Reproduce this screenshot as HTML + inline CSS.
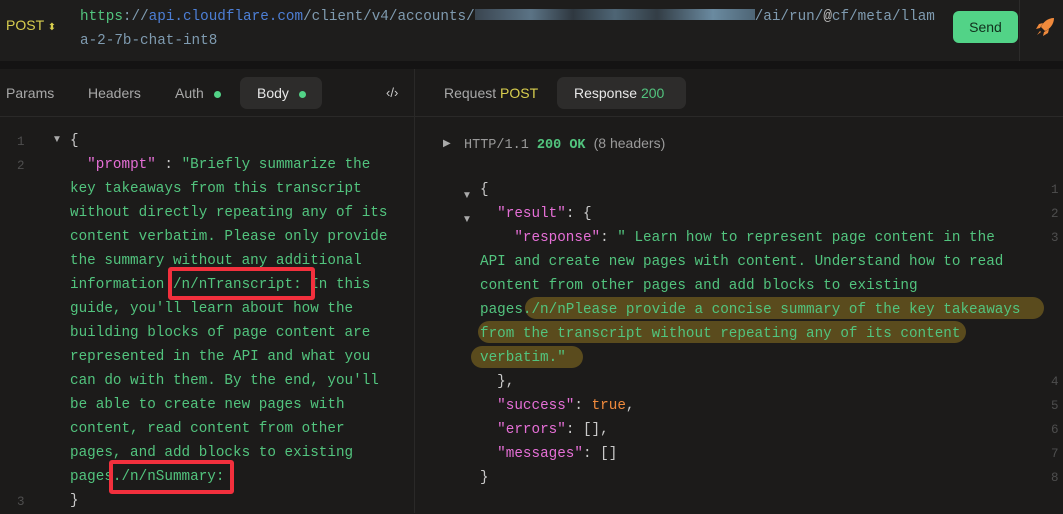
<!DOCTYPE html><html><head><style>
body{margin:0;width:1063px;height:513px;background:#1c1b1a;overflow:hidden;position:relative;font-family:"Liberation Sans",sans-serif}
.a{position:absolute;white-space:pre}
.m{font-family:"Liberation Mono",monospace;font-size:14.3px}
.g{color:#52c47e}.p{color:#e56fd6}.w{color:#c9c9c9}.n{color:#4e4e4e;font-family:"Liberation Mono",monospace;font-size:12.5px}.y{color:#d9cf4e}
.tab{position:absolute;top:77px;height:32px;line-height:32px;font-size:14px;color:#a8a8a8}
</style></head><body>
<div class="a" style="left:0;top:0;width:1063px;height:61px;background:#1e1d1c"></div>
<div class="a" style="left:0;top:61px;width:1063px;height:8px;background:#141313"></div>
<div class="a" style="left:1019px;top:0;width:1px;height:61px;background:#2c2b2a"></div>
<div class="a y" style="left:6px;top:17px;font-size:14px">POST <span style="font-size:10px">⬍</span></div>
<div class="a m" style="left:80px;top:5px;line-height:24px;color:#7f9bb0"><span class="g">https</span>://<span style="color:#4d7fd6">api.cloudflare.com</span>/client/v4/accounts/<span style="display:inline-block;width:280px;height:11px;background:linear-gradient(90deg,#3a4550,#5b7385 20%,#2f3840 35%,#4e6575 50%,#333d45 65%,#6a8aa0 85%,#4e6575)"></span>/ai/run/<span style="color:#bbb">@</span>cf/meta/llam
a-2-7b-chat-int8</div>
<div class="a" style="left:953px;top:11px;width:65px;height:32px;border-radius:6px;background:#52d387;color:#10301c;font-size:14px;text-align:center;line-height:32px">Send</div>
<svg class="a" style="left:1034px;top:16px" width="22" height="22" viewBox="0 0 22 22"><path d="M20 2C14 2 9 6 7 11l4 4c5-2 9-7 9-13z" fill="#f08a3c"/><path d="M6 12l-4 1 3-5 4-1zM10 16l-1 4 5-3 1-4z" fill="#f08a3c"/><path d="M6 15l-3 4 4-3z" fill="#f08a3c"/></svg>
<div class="a" style="left:0;top:116px;width:1063px;height:1px;background:#2a2928"></div>
<div class="a" style="left:414px;top:69px;width:1px;height:444px;background:#2a2928"></div>
<div class="tab" style="left:6px">Params</div>
<div class="tab" style="left:88px">Headers</div>
<div class="tab" style="left:175px">Auth <span style="display:inline-block;width:7px;height:7px;border-radius:50%;background:#52d387;margin-left:6px"></span></div>
<div class="tab" style="left:240px;width:82px;background:#2d2c2b;border-radius:7px;color:#e8e8e8;text-indent:17px">Body <span style="display:inline-block;width:7px;height:7px;border-radius:50%;background:#52d387;margin-left:6px"></span></div>
<div class="tab" style="left:386px;color:#ccc;font-size:13px">‹/›</div>
<div class="tab" style="left:444px">Request <span class="y">POST</span></div>
<div class="tab" style="left:557px;width:129px;background:#2d2c2b;border-radius:7px;color:#e8e8e8;text-indent:17px">Response <span class="g">200</span></div>
<div class="a n" style="left:17px;top:130px;line-height:24px">1
2
 
 
 
 
 
 
 
 
 
 
 
 
 
3</div>
<div class="a" style="left:52px;top:134px;color:#aaa;font-size:10px">▼</div>
<div class="a m g" style="left:70px;top:129px;line-height:24px"><span class="w">{</span>
  <span class="p">"prompt"</span> <span class="w">:</span> "Briefly summarize the
key takeaways from this transcript
without directly repeating any of its
content verbatim. Please only provide
the summary without any additional
information /n/nTranscript: In this
guide, you'll learn about how the
building blocks of page content are
represented in the API and what you
can do with them. By the end, you'll
be able to create new pages with
content, read content from other
pages, and add blocks to existing
pages./n/nSummary:
<span class="w">}</span></div>
<div class="a" style="left:168px;top:267px;width:139px;height:25px;border:4px solid #f2303d;border-radius:3px"></div>
<div class="a" style="left:109px;top:460px;width:117px;height:26px;border:4px solid #f2303d;border-radius:3px"></div>
<div class="a" style="left:443px;top:138px;color:#aaa;font-size:10px">▶</div>
<div class="a m" style="left:464px;top:135px;color:#9a9a9a;font-size:13.5px">HTTP/1.1 <b class="g">200 OK</b> <span style="font-family:'Liberation Sans';font-size:14px">(8 headers)</span></div>
<div class="a" style="left:525px;top:297px;width:519px;height:22px;background:#5a4b1d;border-radius:11px"></div>
<div class="a" style="left:478px;top:321px;width:488px;height:22px;background:#5a4b1d;border-radius:11px"></div>
<div class="a" style="left:471px;top:346px;width:112px;height:22px;background:#5a4b1d;border-radius:11px"></div>
<div class="a" style="left:462px;top:184px;color:#aaa;font-size:10px;line-height:24px">▼<br>▼</div>
<div class="a m g" style="left:480px;top:178px;line-height:24px"><span class="w">{</span>
  <span class="p">"result"</span><span class="w">: {</span>
    <span class="p">"response"</span><span class="w">:</span> " Learn how to represent page content in the
API and create new pages with content. Understand how to read
content from other pages and add blocks to existing
pages./n/nPlease provide a concise summary of the key takeaways
from the transcript without repeating any of its content
verbatim."
  <span class="w">},</span>
  <span class="p">"success"</span><span class="w">:</span> <span style="color:#f08a3c">true</span><span class="w">,</span>
  <span class="p">"errors"</span><span class="w">: [],</span>
  <span class="p">"messages"</span><span class="w">: []</span>
<span class="w">}</span></div>
<div class="a n" style="left:1051px;top:178px;line-height:24px">1
2
3
 
 
 
 
 
4
5
6
7
8</div>
</body></html>
